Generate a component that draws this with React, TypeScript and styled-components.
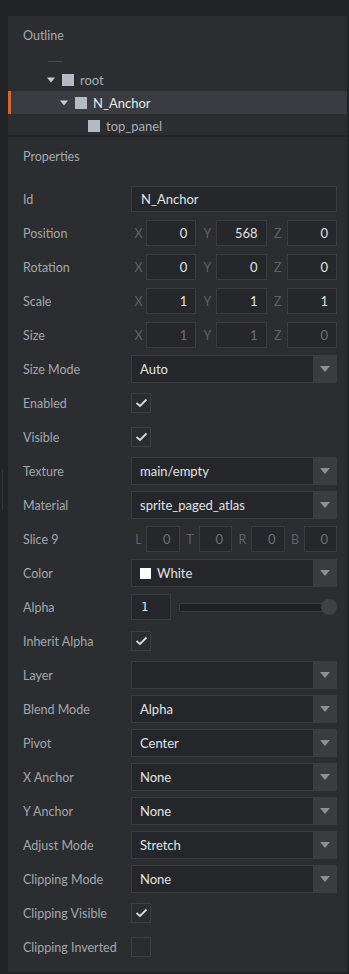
import React from "react";
import styled, { createGlobalStyle } from "styled-components";

const GlobalStyle = createGlobalStyle`
  html, body { margin: 0; padding: 0; background: #212327; }
  body { font-family: Lato, "Noto Sans", sans-serif; font-size: 12.5px; }
  * { box-sizing: border-box; }
`;

const Page = styled.div`
  width: 349px;
  height: 974px;
  display: flex;
  background: #212327;
`;

const Gutter = styled.div`
  width: 8px;
  padding-top: 470px;
  padding-left: 2px;
`;

const GutterHandle = styled.div`
  width: 1px;
  height: 40px;
  background: #34363b;
`;

const Panel = styled.div`
  flex: 1;
  margin: 16px 2px 2px 0;
  background: #2b2d31;
  display: flex;
  flex-direction: column;
`;

const OutlineSection = styled.div`
  height: 119px;
  overflow: hidden;
  display: flex;
  flex-direction: column;
`;

const SectionTitle = styled.div`
  height: 40px;
  line-height: 40px;
  padding-left: 15px;
  color: #a6aab0;
  font-size: 12.5px;
`;

const Divider = styled.div`
  height: 2px;
  background: #222428;
`;

const Tree = styled.div`
  display: flex;
  flex-direction: column;
`;

const TreeTop = styled.div`
  height: 12px;
  padding: 5px 0 0 40px;
`;

const TreeTopLine = styled.div`
  width: 14px;
  height: 1px;
  background: #4a4c51;
`;

const TreeRow = styled.div<{ $depth: number; $selected?: boolean }>`
  height: 23px;
  display: flex;
  align-items: center;
  padding-left: ${(p) => 39 + p.$depth * 13}px;
  background: ${(p) => (p.$selected ? "#3a3c41" : "transparent")};
  box-shadow: ${(p) => (p.$selected ? "inset 3px 0 0 #d0683a" : "none")};
  color: ${(p) => (p.$selected ? "#e6e8eb" : "#a8acb2")};
  font-size: 13px;
`;

const Caret = styled.span<{ $hidden?: boolean }>`
  width: 15px;
  display: flex;
  align-items: center;
  visibility: ${(p) => (p.$hidden ? "hidden" : "visible")};
`;

const NodeIcon = styled.span`
  width: 12px;
  height: 12px;
  background: #b3bac3;
  margin-right: 6px;
`;

const PropsSection = styled.div`
  flex: 1;
  display: flex;
  flex-direction: column;
`;

const PropsList = styled.div`
  padding-top: 5px;
  display: flex;
  flex-direction: column;
`;

const Row = styled.div`
  height: 34px;
  display: grid;
  grid-template-columns: 108px 1fr;
  align-items: center;
  padding: 0 10px 0 15px;
`;

const Label = styled.div`
  color: #a3a7ad;
  font-size: 12.5px;
  white-space: nowrap;
`;

const TextBox = styled.div<{ $align?: "left" | "right"; $disabled?: boolean; $mono?: boolean }>`
  height: 26px;
  display: flex;
  align-items: center;
  justify-content: ${(p) => (p.$align === "right" ? "flex-end" : "flex-start")};
  padding: 0 ${(p) => (p.$align === "right" ? "8px" : "9px")};
  background: #26272b;
  border: 1px solid #3a3c41;
  color: ${(p) => (p.$disabled ? "#6c6f74" : "#e0e2e5")};
  font-family: ${(p) => (p.$mono ? '"DejaVu Sans Mono", monospace' : "inherit")};
  font-size: ${(p) => (p.$mono ? "12px" : "13px")};
  min-width: 0;
`;

const Vector = styled.div<{ $cols: string }>`
  display: grid;
  grid-template-columns: ${(p) => p.$cols};
  align-items: center;
`;

const AxisLabel = styled.span<{ $pad?: number }>`
  text-align: center;
  color: #5f6267;
  font-size: 12.5px;
  padding-left: ${(p) => p.$pad ?? 0}px;
`;

const Select = styled.div`
  height: 28px;
  display: flex;
  background: #3a3c40;
`;

const SelectMain = styled.div`
  flex: 1;
  display: flex;
  align-items: center;
  gap: 6px;
  margin: 1px 0 1px 1px;
  padding-left: 8px;
  background: #25262a;
  color: #e0e2e5;
  font-size: 13px;
`;

const SelectButton = styled.div`
  width: 24px;
  display: flex;
  align-items: center;
  justify-content: center;
`;

const Swatch = styled.span`
  width: 11px;
  height: 11px;
  background: #ffffff;
`;

const Check = styled.div`
  width: 20px;
  height: 20px;
  border: 1px solid #3c3e43;
  background: #2a2c30;
  display: flex;
  align-items: center;
  justify-content: center;
`;

const AlphaRow = styled.div`
  display: flex;
  align-items: center;
  gap: 8px;
`;

const AlphaBox = styled(TextBox)`
  width: 40px;
  flex: none;
`;

const Slider = styled.div`
  flex: 1;
  height: 16px;
  display: flex;
  align-items: center;
  position: relative;
`;

const Track = styled.div`
  flex: 1;
  height: 9px;
  background: #1f2024;
  border: 1px solid #3a3c40;
  border-radius: 2px;
  margin-right: 4px;
`;

const Thumb = styled.div`
  position: absolute;
  right: 0;
  top: 0;
  width: 16px;
  height: 16px;
  border-radius: 50%;
  background: #3f4146;
`;

const DownArrow = ({ color = "#8c8f94", w = 10, h = 6 }: { color?: string; w?: number; h?: number }) => (
  <svg width={w} height={h} viewBox="0 0 10 6">
    <polygon points="0,0 10,0 5,6" fill={color} />
  </svg>
);

const CheckMark = () => (
  <svg width="13" height="10" viewBox="0 0 13 10">
    <polyline points="1.5,5 5,8 11.5,1.5" fill="none" stroke="#d6d8db" strokeWidth="1.8" />
  </svg>
);

const V3 = "15px 1fr 20px 1fr 20px 1fr";
const V4 = "15px 1fr 19px 1fr 19px 1fr 19px 1fr";

const Vec = ({ labels, values, cols, disabled }: { labels: string[]; values: string[]; cols: string; disabled?: boolean }) => (
  <Vector $cols={cols}>
    {labels.map((l, i) => (
      <React.Fragment key={l}>
        <AxisLabel $pad={i === 0 ? 0 : 2}>{l}</AxisLabel>
        <TextBox $align="right" $disabled={disabled}>{values[i]}</TextBox>
      </React.Fragment>
    ))}
  </Vector>
);

const Sel = ({ value, swatch }: { value: string; swatch?: boolean }) => (
  <Select>
    <SelectMain>
      {swatch && <Swatch />}
      {value}
    </SelectMain>
    <SelectButton>
      <DownArrow />
    </SelectButton>
  </Select>
);

const Box = ({ checked }: { checked?: boolean }) => <Check>{checked && <CheckMark />}</Check>;

export default function App() {
  return (
    <>
      <GlobalStyle />
      <Page>
        <Gutter>
          <GutterHandle />
        </Gutter>
        <Panel>
          <OutlineSection>
            <SectionTitle>Outline</SectionTitle>
            <Tree>
              <TreeTop>
                <TreeTopLine />
              </TreeTop>
              <TreeRow $depth={0}>
                <Caret><DownArrow color="#c9cbce" w={8} h={6} /></Caret>
                <NodeIcon />
                root
              </TreeRow>
              <TreeRow $depth={1} $selected>
                <Caret><DownArrow color="#c9cbce" w={8} h={6} /></Caret>
                <NodeIcon />
                N_Anchor
              </TreeRow>
              <TreeRow $depth={2}>
                <Caret $hidden />
                <NodeIcon />
                top_panel
              </TreeRow>
            </Tree>
          </OutlineSection>
          <Divider />
          <PropsSection>
            <SectionTitle>Properties</SectionTitle>
            <PropsList>
              <Row><Label>Id</Label><TextBox>N_Anchor</TextBox></Row>
              <Row><Label>Position</Label><Vec cols={V3} labels={["X", "Y", "Z"]} values={["0", "568", "0"]} /></Row>
              <Row><Label>Rotation</Label><Vec cols={V3} labels={["X", "Y", "Z"]} values={["0", "0", "0"]} /></Row>
              <Row><Label>Scale</Label><Vec cols={V3} labels={["X", "Y", "Z"]} values={["1", "1", "1"]} /></Row>
              <Row><Label>Size</Label><Vec cols={V3} labels={["X", "Y", "Z"]} values={["1", "1", "0"]} disabled /></Row>
              <Row><Label>Size Mode</Label><Sel value="Auto" /></Row>
              <Row><Label>Enabled</Label><Box checked /></Row>
              <Row><Label>Visible</Label><Box checked /></Row>
              <Row><Label>Texture</Label><Sel value="main/empty" /></Row>
              <Row><Label>Material</Label><Sel value="sprite_paged_atlas" /></Row>
              <Row><Label>Slice 9</Label><Vec cols={V4} labels={["L", "T", "R", "B"]} values={["0", "0", "0", "0"]} disabled /></Row>
              <Row><Label>Color</Label><Sel value="White" swatch /></Row>
              <Row>
                <Label>Alpha</Label>
                <AlphaRow>
                  <AlphaBox $mono>1</AlphaBox>
                  <Slider>
                    <Track />
                    <Thumb />
                  </Slider>
                </AlphaRow>
              </Row>
              <Row><Label>Inherit Alpha</Label><Box checked /></Row>
              <Row><Label>Layer</Label><Sel value="" /></Row>
              <Row><Label>Blend Mode</Label><Sel value="Alpha" /></Row>
              <Row><Label>Pivot</Label><Sel value="Center" /></Row>
              <Row><Label>X Anchor</Label><Sel value="None" /></Row>
              <Row><Label>Y Anchor</Label><Sel value="None" /></Row>
              <Row><Label>Adjust Mode</Label><Sel value="Stretch" /></Row>
              <Row><Label>Clipping Mode</Label><Sel value="None" /></Row>
              <Row><Label>Clipping Visible</Label><Box checked /></Row>
              <Row><Label>Clipping Inverted</Label><Box /></Row>
            </PropsList>
          </PropsSection>
        </Panel>
      </Page>
    </>
  );
}
